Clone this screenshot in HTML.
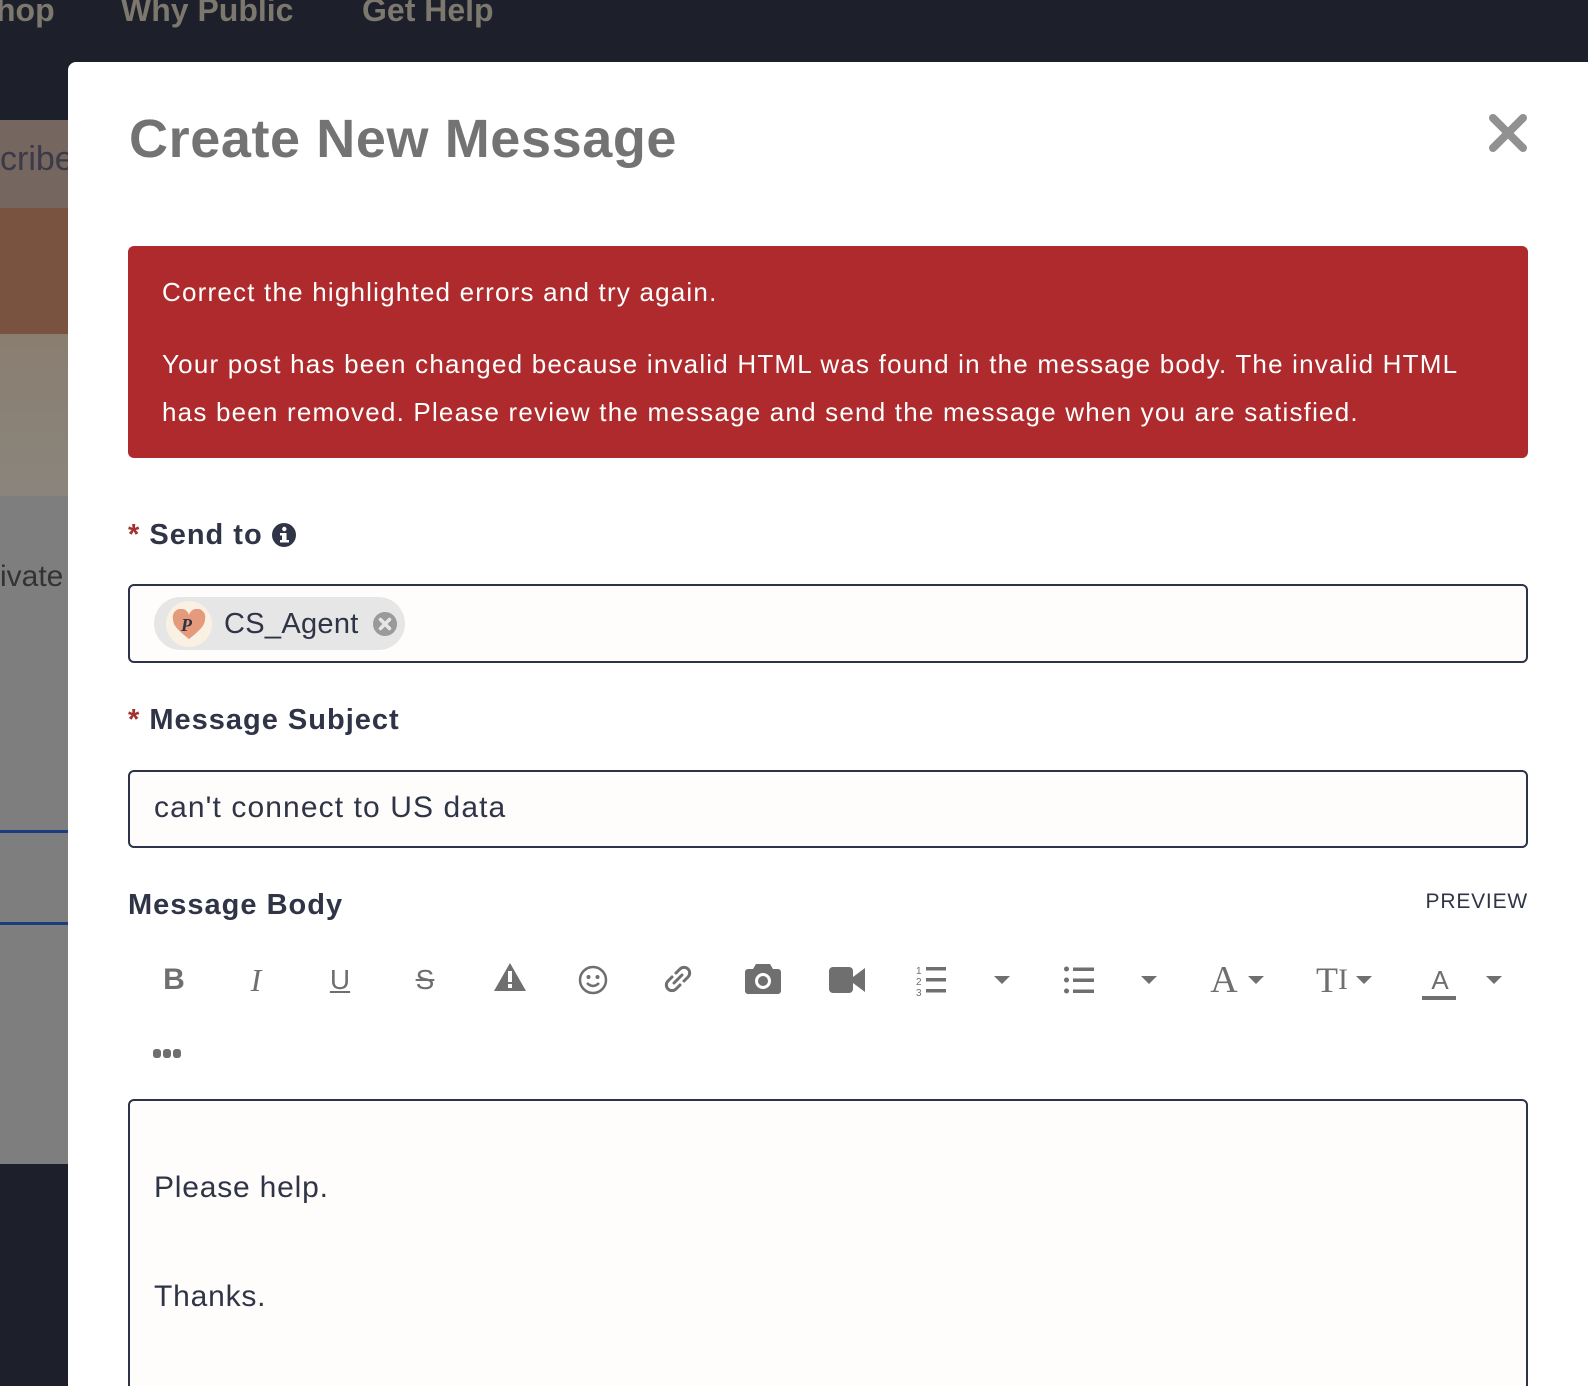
<!DOCTYPE html>
<html style="width:1588px;height:1386px;overflow:hidden"><head><meta charset="utf-8"><style>
*{margin:0;padding:0;box-sizing:border-box}
body{width:1588px;height:1386px;overflow:hidden;background:#1d1f2b;font-family:"Liberation Sans",sans-serif;position:relative}
.abs{position:absolute}
.nav{color:#7c786e;font-weight:bold;font-size:32px;top:-8px}
.modal{left:68px;top:62px;width:1540px;height:1324px;background:#fff;border-radius:8px 0 0 0}
.lbl{color:#2f3447;font-weight:bold;font-size:29px;letter-spacing:1px}
.req{color:#a2302e}
.inp{left:128px;width:1400px;border:2px solid #2d3348;border-radius:6px;background:#fefdfb}
.t{color:#2f3447;font-size:30px;letter-spacing:1.1px}
.ic{top:958px;height:44px;display:flex;align-items:center;justify-content:center;color:#6f6f6f}
.car{width:0;height:0;border-left:8px solid transparent;border-right:8px solid transparent;border-top:8px solid #6f6f6f}
.err{color:#fff;font-size:26px;line-height:48px;letter-spacing:1.2px}
</style></head><body>
<div class="abs nav" style="left:-4px">hop</div>
<div class="abs nav" style="left:121px">Why Public</div>
<div class="abs nav" style="left:362px">Get Help</div>
<div class="abs" style="left:0;top:120px;width:68px;height:88px;background:#75665f"></div>
<div class="abs" style="left:0;top:140px;font-size:34px;color:#3a3a48">cribe</div>
<div class="abs" style="left:0;top:208px;width:68px;height:126px;background:#79533f"></div>
<div class="abs" style="left:0;top:334px;width:68px;height:162px;background:linear-gradient(#8a7e70,#8a857c)"></div>
<div class="abs" style="left:0;top:496px;width:68px;height:668px;background:#7e7e7e"></div>
<div class="abs" style="left:0;top:560px;font-size:30px;color:#333">ivate</div>
<div class="abs" style="left:0;top:830px;width:68px;height:3px;background:#1c3c80"></div>
<div class="abs" style="left:0;top:922px;width:68px;height:3px;background:#1c3c80"></div>
<div class="abs" style="left:0;top:1164px;width:68px;height:222px;background:#1d1f2b"></div>

<div class="abs modal"></div>
<div class="abs" style="left:129px;top:108px;font-size:54px;font-weight:bold;color:#737373;letter-spacing:0.6px">Create New Message</div>
<svg class="abs" style="left:1488px;top:113px" width="40" height="40" viewBox="0 0 40 40"><path d="M5 5L35 35M35 5L5 35" stroke="#919191" stroke-width="8" stroke-linecap="round"/></svg>

<div class="abs" style="left:128px;top:246px;width:1400px;height:212px;background:#ae2a2c;border-radius:6px"></div>
<div class="abs err" style="left:162px;top:268px">Correct the highlighted errors and try again.</div>
<div class="abs err" style="left:162px;top:340px;width:1340px">Your post has been changed because invalid HTML was found in the message body. The invalid HTML has been removed. Please review the message and send the message when you are satisfied.</div>

<div class="abs lbl" style="left:128px;top:519px"><span class="req">*</span> Send to <svg width="24" height="24" viewBox="0 0 24 24" style="vertical-align:-3px"><circle cx="12" cy="12" r="12" fill="#2f3447"/><rect x="10" y="10" width="4.5" height="9" fill="#fff"/><rect x="8" y="10" width="4" height="2.5" fill="#fff"/><rect x="8" y="17" width="9" height="2.5" fill="#fff"/><circle cx="12.3" cy="6" r="2.2" fill="#fff"/></svg></div>
<div class="abs inp" style="top:584px;height:79px"></div>
<div class="abs" style="left:154px;top:597px;width:251px;height:53px;background:#e6e6e6;border-radius:27px"></div>
<div class="abs" style="left:166px;top:601px;width:46px;height:46px;border-radius:50%;background:#f9f1e3"></div>
<svg class="abs" style="left:171px;top:609px" width="36" height="32" viewBox="0 0 36 32"><path d="M18 30C8 22 2 17 2 10A8 8 0 0 1 18 6A8 8 0 0 1 34 10C34 17 28 22 18 30Z" fill="#e59a7c"/><text x="10" y="22" font-family="Liberation Serif" font-weight="bold" font-style="italic" font-size="18" fill="#2d3348">P</text></svg>
<div class="abs t" style="left:224px;top:608px;font-size:29px;letter-spacing:0.3px">CS_Agent</div>
<svg class="abs" style="left:373px;top:612px" width="24" height="24" viewBox="0 0 24 24"><circle cx="12" cy="12" r="12" fill="#9a9a9a"/><path d="M7.5 7.5L16.5 16.5M16.5 7.5L7.5 16.5" stroke="#e6e6e6" stroke-width="3.5" stroke-linecap="round"/></svg>

<div class="abs lbl" style="left:128px;top:704px"><span class="req">*</span> Message Subject</div>
<div class="abs inp" style="top:770px;height:78px"></div>
<div class="abs t" style="left:154px;top:791px">can't connect to US data</div>

<div class="abs lbl" style="left:128px;top:889px">Message Body</div>
<div class="abs" style="right:60px;top:890px;font-size:21px;color:#2f3447;letter-spacing:0.8px">PREVIEW</div>

<div class="abs ic" style="left:158px;width:32px;font-size:30px;font-weight:bold">B</div>
<div class="abs ic" style="left:240px;width:32px;font-size:32px;font-style:italic;font-family:'Liberation Serif',serif">I</div>
<div class="abs ic" style="left:324px;width:32px;font-size:28px;text-decoration:underline">U</div>
<div class="abs ic" style="left:409px;width:32px;font-size:28px;text-decoration:line-through">S</div>
<svg class="abs" style="left:493px;top:962px" width="34" height="30" viewBox="0 0 34 30"><path d="M17 1L33 29H1Z" fill="#6f6f6f"/><rect x="15" y="9" width="4" height="11" fill="#fff"/><rect x="15" y="22" width="4" height="4" fill="#fff"/></svg>
<svg class="abs" style="left:578px;top:965px" width="30" height="30" viewBox="0 0 30 30"><circle cx="15" cy="15" r="13" fill="none" stroke="#6f6f6f" stroke-width="2.5"/><circle cx="10.5" cy="12" r="2" fill="#6f6f6f"/><circle cx="19.5" cy="12" r="2" fill="#6f6f6f"/><path d="M9 18Q15 24 21 18" fill="none" stroke="#6f6f6f" stroke-width="2.5"/></svg>
<svg class="abs" style="left:663px;top:964px" width="30" height="30" viewBox="0 0 30 30"><path d="M13 9L17 5A4.5 4.5 0 0 1 25 13L21 17M17 21L13 25A4.5 4.5 0 0 1 5 17L9 13M11 19L19 11" fill="none" stroke="#6f6f6f" stroke-width="3" stroke-linecap="round"/></svg>
<svg class="abs" style="left:745px;top:962px" width="36" height="32" viewBox="0 0 36 32"><path d="M11 2H25L28 7H33A3 3 0 0 1 36 10V29A3 3 0 0 1 33 32H3A3 3 0 0 1 0 29V10A3 3 0 0 1 3 7H8Z" fill="#6f6f6f"/><circle cx="18" cy="19" r="8" fill="#fff"/><circle cx="18" cy="19" r="5" fill="#6f6f6f"/></svg>
<svg class="abs" style="left:829px;top:967px" width="36" height="26" viewBox="0 0 36 26"><rect x="0" y="0" width="24" height="26" rx="4" fill="#6f6f6f"/><path d="M24 10L36 1V25L24 16Z" fill="#6f6f6f"/></svg>
<svg class="abs" style="left:916px;top:964px" width="30" height="32" viewBox="0 0 30 32"><g fill="#6f6f6f"><rect x="10" y="3" width="20" height="3.5"/><rect x="10" y="14" width="20" height="3.5"/><rect x="10" y="25" width="20" height="3.5"/><text x="0" y="10" font-size="10" font-family="Liberation Sans">1</text><text x="0" y="21" font-size="10" font-family="Liberation Sans">2</text><text x="0" y="32" font-size="10" font-family="Liberation Sans">3</text></g></svg>
<div class="abs car" style="left:994px;top:976px"></div>
<svg class="abs" style="left:1064px;top:966px" width="30" height="28" viewBox="0 0 30 28"><g fill="#6f6f6f"><circle cx="2.5" cy="3" r="2.5"/><circle cx="2.5" cy="14" r="2.5"/><circle cx="2.5" cy="25" r="2.5"/><rect x="9" y="1.5" width="21" height="3.5"/><rect x="9" y="12.5" width="21" height="3.5"/><rect x="9" y="23.5" width="21" height="3.5"/></g></svg>
<div class="abs car" style="left:1141px;top:976px"></div>
<div class="abs ic" style="left:1208px;width:32px;font-size:38px;font-family:'Liberation Serif',serif">A</div>
<div class="abs car" style="left:1248px;top:976px"></div>
<div class="abs ic" style="left:1312px;width:40px;font-size:36px;font-family:'Liberation Serif',serif">T<span style="font-size:30px">I</span></div>
<div class="abs car" style="left:1356px;top:976px"></div>
<div class="abs ic" style="left:1424px;width:32px;font-size:26px">A</div>
<div class="abs" style="left:1422px;top:996px;width:34px;height:4px;background:#6f6f6f"></div>
<div class="abs car" style="left:1486px;top:976px"></div>
<svg class="abs" style="left:153px;top:1049px" width="28" height="9" viewBox="0 0 28 9"><g fill="#6f6f6f"><rect x="0" y="0" width="8" height="9" rx="3"/><rect x="10" y="0" width="8" height="9" rx="3"/><rect x="20" y="0" width="8" height="9" rx="3"/></g></svg>

<div class="abs inp" style="top:1099px;height:300px"></div>
<div class="abs t" style="left:154px;top:1171px;letter-spacing:0.8px">Please help.</div>
<div class="abs t" style="left:154px;top:1280px;letter-spacing:0.8px">Thanks.</div>
</body></html>
